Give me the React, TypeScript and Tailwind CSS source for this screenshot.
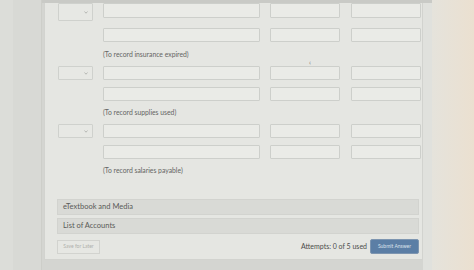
import React from "react";

const font = { fontFamily: "Lato, 'Noto Sans', sans-serif" };

function Dropdown({ tall }: { tall?: boolean }) {
  return (
    <div
      className={`w-[35px] ${tall ? "h-[18px]" : "h-[14px]"} border border-[#cfd1cd] bg-[#e7e8e4] rounded-[1px] flex items-center justify-end pr-[4px] shrink-0`}
    >
      <svg width="4" height="3" viewBox="0 0 4 3">
        <path d="M0.5 0.5 L2 2.2 L3.5 0.5" stroke="#a3a5a1" strokeWidth="0.7" fill="none" />
      </svg>
    </div>
  );
}

function Input({ w }: { w: string }) {
  return <div className={`${w} h-full border border-[#cdcfcb] bg-[#eaebe7] rounded-[1px] shrink-0`} />;
}

function Row({ dropdown, h, tall }: { dropdown?: boolean; h: string; tall?: boolean }) {
  return (
    <div className={`flex items-start ${h}`}>
      <div className="w-[35px] shrink-0 h-full flex items-start">{dropdown ? <Dropdown tall={tall} /> : null}</div>
      <div className="ml-[10px] flex h-full">
        <Input w="w-[157px]" />
        <div className="ml-[10px] h-full flex">
          <Input w="w-[70px]" />
        </div>
        <div className="ml-[11px] h-full flex">
          <Input w="w-[70px]" />
        </div>
      </div>
    </div>
  );
}

function Note({ text, h }: { text: string; h: string }) {
  return (
    <div className={`${h} flex items-center pl-[45px]`}>
      <span className="text-[6.8px] leading-none text-[#646562]">{text}</span>
    </div>
  );
}

export default function App() {
  return (
    <div className="w-[474px] h-[270px] overflow-hidden flex bg-[#d6d7d3] relative" style={font}>
      {/* left sidebar */}
      <div className="w-[42px] h-full flex shrink-0">
        <div className="w-[13px] h-full bg-[#dcddd9]" />
        <div className="flex-1 h-full bg-[#d8d9d5] border-r border-[#cdcec9]" />
      </div>
      {/* main column */}
      <div className="w-[390px] h-full flex flex-col shrink-0 bg-[#d4d5d1]">
        <div className="h-[3px] bg-[#c9cac6]" />
        <div className="flex flex-1">
          <div className="w-[2px]" />
          <div className="w-[379px] h-[257px] bg-[#e5e6e2] border-l border-r border-b border-[#d2d3cf] flex flex-col pl-[13px]">
            <Row dropdown tall h="h-[15px]" />
            <div className="mt-[10px]">
              <Row h="h-[14px]" />
            </div>
            <Note text="(To record insurance expired)" h="h-[24px]" />
            <Row dropdown h="h-[14px]" />
            <div className="mt-[7px]">
              <Row h="h-[14px]" />
            </div>
            <Note text="(To record supplies used)" h="h-[23px]" />
            <Row dropdown h="h-[14px]" />
            <div className="mt-[7px]">
              <Row h="h-[14px]" />
            </div>
            <Note text="(To record salaries payable)" h="h-[22px]" />
            <div className="mt-[18px] w-[362px] -ml-[1px] flex flex-col">
              <div className="h-[16px] bg-[#d9dad6] border border-[#d2d3cf] flex items-center pl-[5px]">
                <span className="text-[7.5px] leading-none text-[#5a5b58]">eTextbook and Media</span>
              </div>
              <div className="mt-[3px] h-[16px] bg-[#d9dad6] border border-[#d2d3cf] flex items-center pl-[5px]">
                <span className="text-[7.5px] leading-none text-[#5a5b58]">List of Accounts</span>
              </div>
              <div className="mt-[5px] h-[15px] flex items-center justify-between">
                <div className="w-[43px] h-[14px] border border-[#d2d3cf] bg-[#e6e7e3] flex items-center justify-center">
                  <span className="text-[5px] leading-none text-[#afb0ac]">Save for Later</span>
                </div>
                <div className="flex items-center">
                  <span className="text-[7px] leading-none text-[#4c4d4a]">Attempts: 0 of 5 used</span>
                  <div className="ml-[3px] w-[49px] h-[15px] bg-[#5b7ea5] rounded-[2px] border border-[#7d95b0] flex items-center justify-center">
                    <span className="text-[5px] leading-none text-[#dbe3ec]">Submit Answer</span>
                  </div>
                </div>
              </div>
            </div>
          </div>
          <div className="flex-1 bg-[#e0e1dd]" />
        </div>
      </div>
      {/* right beige region */}
      <div className="flex-1 h-full bg-gradient-to-r from-[#e5e3dc] to-[#ebe0d0]" />
      {/* mouse cursor */}
      <div className="absolute left-[309px] top-[59px] text-[7px] leading-none text-[#7d7f7b]">‹</div>
    </div>
  );
}
